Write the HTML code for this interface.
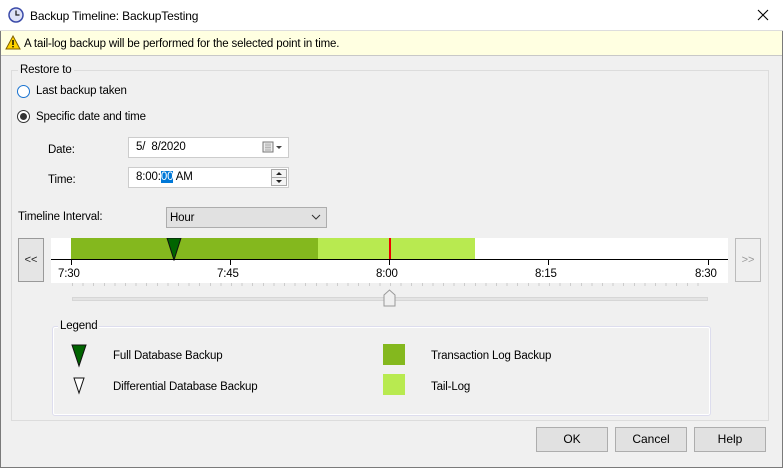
<!DOCTYPE html>
<html><head><style>
*{box-sizing:border-box;margin:0;padding:0}
body{width:783px;height:468px;overflow:hidden;background:#f0f0f0;font-family:"Liberation Sans",sans-serif;font-size:12px;color:#000;position:relative}
.a{position:absolute}
.btn{position:absolute;background:#e1e1e1;border:1px solid #adadad;text-align:center;line-height:22px;font-size:12px}
.lbl{position:absolute;font-size:11.5px;letter-spacing:-0.15px;white-space:nowrap;margin-top:1px}
</style></head><body>
<div class="a" style="left:0;top:0;width:783px;height:468px;border:1px solid #7a7a7a;border-top:none"></div>
<div class="a" style="left:0;top:0;width:783px;height:31px;background:#fff;border-bottom:1px solid #ddd"></div>
<svg class="a" style="left:8px;top:7px" width="16" height="16"><circle cx="8" cy="8" r="7" fill="#dfe3f7" stroke="#3a4aa8" stroke-width="1.5"/><path d="M8 3.5V8H11.5" stroke="#222" stroke-width="1.3" fill="none"/></svg>
<div class="lbl" style="left:30px;top:8px;font-size:12px">Backup Timeline: BackupTesting</div>
<svg class="a" style="left:757px;top:9px" width="12" height="12"><path d="M1 1L11 11M11 1L1 11" stroke="#000" stroke-width="1.1"/></svg>
<div class="a" style="left:1px;top:31px;width:781px;height:25px;background:#ffffe1;border-bottom:1px solid #c8c8c8"></div>
<svg class="a" style="left:5px;top:35px" width="16" height="15"><path d="M8 1L15 14H1Z" fill="#ffd400" stroke="#806000" stroke-width="1"/><rect x="7.3" y="5" width="1.4" height="5" fill="#000"/><rect x="7.3" y="11" width="1.4" height="1.4" fill="#000"/></svg>
<div class="lbl" style="left:24px;top:37px">A tail-log backup will be performed for the selected point in time.</div>

<div class="a" style="left:11px;top:70px;width:758px;height:351px;border:1px solid #dcdcdc"></div>
<div class="lbl" style="left:18px;top:63px;background:#f0f0f0;padding:0 2px">Restore to</div>
<div class="a" style="left:17px;top:85px;width:13px;height:13px;border:1px solid #1a73d0;border-radius:50%;background:#fff"></div>
<div class="lbl" style="left:36px;top:84px">Last backup taken</div>
<div class="a" style="left:17px;top:110px;width:13px;height:13px;border:1px solid #333;border-radius:50%;background:#fff"></div>
<div class="a" style="left:20px;top:113px;width:7px;height:7px;border-radius:50%;background:#333"></div>
<div class="lbl" style="left:36px;top:110px">Specific date and time</div>

<div class="lbl" style="left:48px;top:143px">Date:</div>
<div class="a" style="left:128px;top:137px;width:161px;height:21px;border:1px solid #ccc;background:#fff"></div>
<div class="lbl" style="left:136px;top:140px">5/&nbsp; 8/2020</div>
<svg class="a" style="left:262px;top:141px" width="24" height="13"><rect x="1" y="1" width="10" height="10" fill="#eee" stroke="#777"/><path d="M3 4h6M3 6.5h6M3 9h6M4 2v8M6 2v8M8 2v8" stroke="#999" stroke-width=".6"/><path d="M14 5h6l-3 3z" fill="#444"/></svg>
<div class="lbl" style="left:48px;top:173px">Time:</div>
<div class="a" style="left:128px;top:167px;width:161px;height:21px;border:1px solid #ccc;background:#fff"></div>
<div class="lbl" style="left:136px;top:170px">8:00:<span style="background:#0078d7;color:#fff">00</span> AM</div>
<div class="a" style="left:271px;top:169px;width:16px;height:17px;border:1px solid #aaa;background:#f4f4f4"></div>
<svg class="a" style="left:271px;top:169px" width="16" height="17"><path d="M5 6h6l-3-3z M5 11h6l-3 3z" fill="#222"/><path d="M0 8.5h16" stroke="#aaa"/></svg>

<div class="lbl" style="left:18px;top:210px">Timeline Interval:</div>
<div class="a" style="left:166px;top:207px;width:161px;height:21px;border:1px solid #adadad;background:#e1e1e1"></div>
<div class="lbl" style="left:170px;top:211px">Hour</div>
<svg class="a" style="left:311px;top:213px" width="10" height="8"><path d="M1 2l4 4 4-4" stroke="#333" fill="none"/></svg>

<div class="btn" style="left:18px;top:238px;width:26px;height:44px;line-height:42px;border-color:#999;background:#e5e5e5;color:#222;font-size:11px">&lt;&lt;</div>
<div class="btn" style="left:735px;top:238px;width:26px;height:44px;line-height:42px;border-color:#bbb;background:#efefef;color:#999;font-size:11px">&gt;&gt;</div>
<div class="a" style="left:51px;top:238px;width:677px;height:45px;background:#fff"></div>
<div class="a" style="left:71px;top:238px;width:247px;height:21px;background:#84b81e"></div>
<div class="a" style="left:318px;top:238px;width:157px;height:21px;background:#b8ea50"></div>
<div class="a" style="left:389px;top:238px;width:2px;height:21px;background:#e00"></div>
<svg class="a" style="left:166px;top:238px" width="16" height="23"><path d="M1 0H15L8 22Z" fill="#006400" stroke="#111"/></svg>
<div class="a" style="left:51px;top:259px;width:677px;height:1px;background:#000"></div>
<div class="a" style="left:71px;top:259px;width:1px;height:6px;background:#000"></div>
<div class="a" style="left:230px;top:259px;width:1px;height:6px;background:#000"></div>
<div class="a" style="left:389px;top:259px;width:1px;height:6px;background:#000"></div>
<div class="a" style="left:548px;top:259px;width:1px;height:6px;background:#000"></div>
<div class="a" style="left:708px;top:259px;width:1px;height:6px;background:#000"></div>
<div class="lbl" style="left:58px;top:267px">7:30</div>
<div class="lbl" style="left:217px;top:267px">7:45</div>
<div class="lbl" style="left:376px;top:267px">8:00</div>
<div class="lbl" style="left:535px;top:267px">8:15</div>
<div class="lbl" style="left:695px;top:267px">8:30</div>
<div class="a" style="left:72px;top:283px;width:636px;height:3px;background:repeating-linear-gradient(90deg,#ccc 0 1px,transparent 1px 10.6px)"></div>
<div class="a" style="left:72px;top:297px;width:636px;height:4px;background:#e3e3e3;border:1px solid #d6d6d6"></div>
<svg class="a" style="left:383px;top:289px" width="13" height="18"><path d="M1 17V6L6.5 1 12 6V17Z" fill="#f0f0f0" stroke="#999"/></svg>

<div class="a" style="left:52px;top:326px;width:659px;height:90px;border:1px solid #dde;border-radius:3px;box-shadow:inset 0 0 0 1px #fff"></div>
<div class="lbl" style="left:58px;top:319px;background:#f0f0f0;padding:0 2px">Legend</div>
<svg class="a" style="left:71px;top:344px" width="16" height="24"><path d="M1 1H15L8 22Z" fill="#006400" stroke="#111"/></svg>
<div class="lbl" style="left:113px;top:349px">Full Database Backup</div>
<svg class="a" style="left:73px;top:377px" width="12" height="18"><path d="M1 1H11L6 16Z" fill="#fff" stroke="#111"/></svg>
<div class="lbl" style="left:113px;top:380px">Differential Database Backup</div>
<div class="a" style="left:383px;top:344px;width:22px;height:21px;background:#84b81e"></div>
<div class="lbl" style="left:431px;top:349px">Transaction Log Backup</div>
<div class="a" style="left:383px;top:374px;width:22px;height:21px;background:#b8ea50"></div>
<div class="lbl" style="left:431px;top:380px">Tail-Log</div>

<div class="btn" style="left:536px;top:427px;width:72px;height:25px">OK</div>
<div class="btn" style="left:615px;top:427px;width:72px;height:25px">Cancel</div>
<div class="btn" style="left:694px;top:427px;width:72px;height:25px">Help</div>
</body></html>
